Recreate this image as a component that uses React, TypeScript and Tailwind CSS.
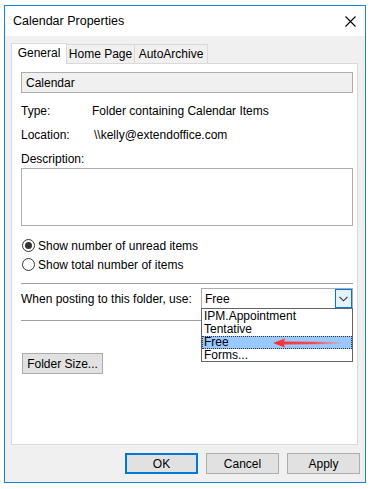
import React from "react";

const font = { fontFamily: '"Liberation Sans", Arial, sans-serif' };

function Radio({ checked, label }: { checked?: boolean; label: string }) {
  return (
    <div className="flex items-center h-[19px]">
      <div className="w-[13px] h-[13px] rounded-full border border-[#333333] bg-white flex items-center justify-center ml-[1px]">
        {checked && <div className="w-[7px] h-[7px] rounded-full bg-[#333333]" />}
      </div>
      <span className="ml-[3px]">{label}</span>
    </div>
  );
}

function Btn({ label, primary, className = "" }: { label: string; primary?: boolean; className?: string }) {
  return (
    <div
      className={
        "h-[21px] flex items-center justify-center bg-[#e1e1e1] " +
        (primary ? "border-2 border-[#0078d7] " : "border border-[#adadad] ") +
        className
      }
    >
      {label}
    </div>
  );
}

export default function App() {
  return (
    <div className="w-[371px] h-[489px] bg-white text-[12px] text-[#000] relative overflow-hidden" style={font}>
      <div className="absolute left-[4px] top-[5px] w-[362px] h-[478px] border border-[#1883d7] bg-[#f0f0f0] flex flex-col">
        {/* Title bar */}
        <div className="h-[30px] bg-white flex items-center justify-between pl-[8px] pr-[9px] shrink-0">
          <span className="text-[12.5px] text-[#000]">Calendar Properties</span>
          <svg width="11" height="11" viewBox="0 0 11 11">
            <path d="M0.5 0.5 L10.5 10.5 M10.5 0.5 L0.5 10.5" stroke="#000" strokeWidth="1.1" />
          </svg>
        </div>
        {/* Body */}
        <div className="pl-[6px] pr-[7px] pt-[7px] flex flex-col">
          {/* Tabs */}
          <div className="flex items-end h-[20px] relative z-10">
            <div className="w-[56px] h-[21px] -mb-[1px] bg-white border border-[#d9d9d9] border-b-0 flex items-center justify-center pb-[2px]">
              General
            </div>
            <div className="w-[68px] h-[19px] bg-[#f0f0f0] border border-[#d9d9d9] border-l-0 border-b-0 flex items-center justify-center">
              Home Page
            </div>
            <div className="w-[73px] h-[19px] bg-[#f0f0f0] border border-[#d9d9d9] border-l-0 border-b-0 flex items-center justify-center">
              AutoArchive
            </div>
          </div>
          {/* Panel */}
          <div className="h-[382px] bg-white border border-[#d9d9d9] pl-[9px] pr-[4px] pt-[8px] relative">
            <div className="h-[21px] bg-[#f0f0f0] border border-[#adadad] flex items-center pl-[4px] w-[332px]">
              Calendar
            </div>
            <div className="flex items-center h-[24px] mt-[6px]">
              <span className="w-[71px]">Type:</span>
              <span>Folder containing Calendar Items</span>
            </div>
            <div className="flex items-center h-[24px]">
              <span className="w-[73px]">Location:</span>
              <span>\\kelly@extendoffice.com</span>
            </div>
            <div className="flex items-center h-[24px]">
              <span>Description:</span>
            </div>
            <div className="h-[58px] w-[332px] border border-[#adadad] bg-white mt-[-3px]" />
            <div className="mt-[10px]">
              <Radio checked label="Show number of unread items" />
              <Radio label="Show total number of items" />
            </div>
            <div className="h-[1px] w-[332px] bg-[#a0a0a0] mt-[9px]" />
            <div className="flex items-center h-[21px] mt-[4px]">
              <span className="w-[180px]">When posting to this folder, use:</span>
              <div className="w-[152px] h-[21px] border border-[#adadad] bg-white flex items-center justify-between pl-[3px] pr-[0px]">
                <span>Free</span>
                <div className="w-[17px] h-[19px] border border-[#0078d7] bg-[#e5f1fb] flex items-center justify-center">
                  <svg width="9" height="6" viewBox="0 0 9 6">
                    <path d="M0.5 0.8 L4.5 4.8 L8.5 0.8" stroke="#333" strokeWidth="1.1" fill="none" />
                  </svg>
                </div>
              </div>
            </div>
            <div className="h-[1px] w-[332px] bg-[#a0a0a0] mt-[11px]" />
            <div className="mt-[32px] ml-[1px]">
              <Btn label="Folder Size..." className="w-[81px]" />
            </div>
            {/* Dropdown list */}
            <div className="absolute left-[189px] top-[244px] w-[152px] h-[54px] border border-[#646464] bg-white z-20 flex flex-col pt-[1px]">
              <div className="h-[13px] leading-[13px] pl-[2px]">IPM.Appointment</div>
              <div className="h-[13px] leading-[13px] pl-[2px]">Tentative</div>
              <div className="h-[13px] leading-[11px] pl-[1px] bg-[#99c9ff] border border-dotted border-[#333] relative">
                Free
                <svg className="absolute left-[70px] top-[1px]" width="72" height="10" viewBox="0 0 72 10">
                  <defs>
                    <linearGradient id="g" x1="0" x2="1" y1="0" y2="0">
                      <stop offset="0" stopColor="#ff2a2a" />
                      <stop offset="0.6" stopColor="#ff4040" stopOpacity="0.9" />
                      <stop offset="1" stopColor="#ff8080" stopOpacity="0.2" />
                    </linearGradient>
                  </defs>
                  <path d="M0 5 L12 0.5 L11 3.5 L70 4 L70 6 L11 6.5 L12 9.5 Z" fill="url(#g)" />
                </svg>
              </div>
              <div className="h-[13px] leading-[13px] pl-[2px]">Forms...</div>
            </div>
          </div>
          {/* Bottom buttons */}
          <div className="flex justify-end gap-[8px] mt-[8px] -mr-[2px]">
            <Btn label="OK" primary className="w-[73px]" />
            <Btn label="Cancel" className="w-[73px]" />
            <Btn label="Apply" className="w-[73px]" />
          </div>
        </div>
      </div>
    </div>
  );
}
